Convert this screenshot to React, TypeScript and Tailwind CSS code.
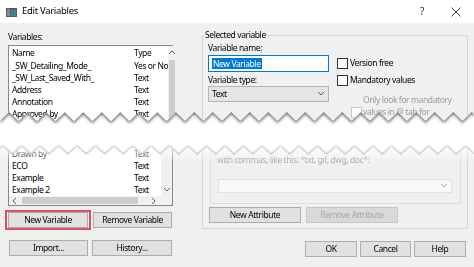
import React from "react";
import clsx from "clsx";

// torn paper edges, built once from the pattern
const W = 474;

const topClip = (() => {
  const pts: string[] = [];
  for (let k = 0; k * 9.25 <= W + 20; k++) {
    const x = k * 9.25;
    const y = k % 2 === 0 ? 121 : 112;
    pts.push(`${x}px ${y}px`);
  }
  pts.reverse();
  return `polygon(0px 0px, ${W}px 0px, ${pts.join(", ")})`;
})();

const bottomClip = (() => {
  const pts: string[] = [];
  for (let k = -2; 3 + k * 9.25 <= W + 20; k++) {
    const x = 3 + k * 9.25;
    const y = k % 2 === 0 ? 0 : 8;
    pts.push(`${x}px ${y}px`);
  }
  return `polygon(${pts.join(", ")}, ${W}px 120px, 0px 120px)`;
})();

const Chevron = ({ dir }: { dir: "up" | "down" | "left" | "right" }) => {
  const d = {
    up: "M1 5 L4 2 L7 5",
    down: "M1 2 L4 5 L7 2",
    left: "M5 1 L2 4 L5 7",
    right: "M2 1 L5 4 L2 7",
  }[dir];
  return (
    <svg width="8" height="8" viewBox="0 0 8 8">
      <path d={d} fill="none" stroke="#606060" strokeWidth="1" />
    </svg>
  );
};

function Btn({ label, className, disabled, focus }: { label: string; className: string; disabled?: boolean; focus?: boolean }) {
  return (
    <div
      className={clsx(
        "h-[16px] flex items-center justify-center border leading-none",
        disabled ? "bg-[#d9d9d9] border-[#c6c6c6] text-[#a8a8a8]" : "bg-[#e1e1e1] border-[#adadad] text-black",
        focus && "border-[#0078d7]",
        className
      )}
    >
      {label}
    </div>
  );
}

function Checkbox({ disabled }: { disabled?: boolean }) {
  return (
    <div
      className={clsx(
        "w-[11px] h-[11px] border bg-white shrink-0",
        disabled ? "border-[#c8c8c8]" : "border-[#333333]"
      )}
    />
  );
}

const topRows: [string, string][] = [
  ["_SW_Detailing_Mode_", "Yes or No"],
  ["_SW_Last_Saved_With_", "Text"],
  ["Address", "Text"],
  ["Annotation", "Text"],
  ["Approved by", "Text"],
];

const bottomRows: [string, string][] = [
  ["Drawn by", "Text"],
  ["ECO", "Text"],
  ["Example", "Text"],
  ["Example 2", "Text"],
];

function TitleBar() {
  return (
    <div className="h-[23px] bg-white flex items-center shrink-0">
      <svg width="11" height="9" viewBox="0 0 11 9" className="ml-[6px] mt-[1px]">
        <rect x="0" y="0" width="11" height="9" fill="#5a5a5a" />
        <rect x="5" y="2" width="5" height="6" fill="#2e8f86" />
        <rect x="1" y="1" width="3" height="7" fill="#8a8a8a" />
      </svg>
      <span className="ml-[5px] text-[9.5px] tracking-[-0.3px] text-black">Edit Variables</span>
      <span className="ml-auto text-[10px] text-[#333333]">?</span>
      <svg width="10" height="10" viewBox="0 0 10 10" className="ml-[27px] mr-[13px]">
        <path d="M0.5 0.5 L9.5 9.5 M9.5 0.5 L0.5 9.5" stroke="#333333" strokeWidth="1" />
      </svg>
    </div>
  );
}

function TopHalf() {
  return (
    <div className="[filter:drop-shadow(0_2px_1.5px_rgba(0,0,0,0.55))]">
      <div className="h-[122px] bg-[#f0f0f0] flex flex-col overflow-hidden" style={{ clipPath: topClip }}>
        <TitleBar />
        <div className="flex">
          {/* variables list */}
          <div className="ml-[8px] w-[165px] flex flex-col">
            <div className="mt-[7px] h-[13px] leading-[13px]">Variables:</div>
            <div className="mt-[2px] h-[90px] border border-b-0 border-[#828790] bg-white flex">
              <div className="flex-1 flex flex-col">
                <div className="h-[14px] flex items-center">
                  <span className="pl-[3px] w-[125px]">Name</span>
                  <span>Type</span>
                </div>
                {topRows.map(([n, t]) => (
                  <div key={n} className="h-[12px] flex items-center whitespace-nowrap">
                    <span className="pl-[3px] w-[125px]">{n}</span>
                    <span className="overflow-hidden flex-1">{t}</span>
                  </div>
                ))}
              </div>
              <div className="w-[11px] bg-[#f0f0f0] flex flex-col">
                <div className="h-[14px] flex items-center justify-center">
                  <Chevron dir="up" />
                </div>
                <div className="flex-1 mx-[1px] bg-[#cdcdcd]" />
              </div>
            </div>
          </div>

          {/* selected variable group */}
          <fieldset className="ml-[29px] mt-[5px] w-[266px] h-[110px] border border-b-0 border-[#d5d5d5] pl-[5px]">
            <legend className="-ml-[4px] px-[1px] leading-[14px]">Selected variable</legend>
            <div className="flex">
              <div className="w-[121px] flex flex-col">
                <div className="h-[12px] leading-[12px]">Variable name:</div>
                <div className="mt-[1px] h-[17px] border border-[#0078d7] bg-white flex items-center">
                  <span className="ml-[3px] px-[1px] bg-[#0078d7] text-white leading-[11px]">New Variable</span>
                </div>
                <div className="mt-[2px] h-[12px] leading-[12px]">Variable type:</div>
                <div className="h-[16px] border border-[#b5b5b5] bg-[#e5e5e5] flex items-center">
                  <span className="pl-[3px] flex-1">Text</span>
                  <span className="mr-[3px]">
                    <Chevron dir="down" />
                  </span>
                </div>
              </div>
              <div className="ml-[8px] flex flex-col">
                <div className="mt-[15px] h-[12px] flex items-center gap-[2px]">
                  <Checkbox />
                  <span>Version free</span>
                </div>
                <div className="mt-[5px] h-[12px] flex items-center gap-[2px]">
                  <Checkbox />
                  <span>Mandatory values</span>
                </div>
                <div className="mt-[8px] ml-[14px] flex gap-[1px] text-[#9a9a9a]">
                  <div className="mt-[13px]">
                    <Checkbox disabled />
                  </div>
                  <div className="flex flex-col">
                    <div className="h-[12px] leading-[12px]">Only look for mandatory</div>
                    <div className="h-[12px] leading-[12px]">values in @ tab for</div>
                    <div className="h-[12px] leading-[12px]">SOLIDWORKS files</div>
                  </div>
                </div>
              </div>
            </div>
          </fieldset>
        </div>
      </div>
    </div>
  );
}

function BottomHalf() {
  return (
    <div className="[filter:drop-shadow(0_-1px_1px_rgba(0,0,0,0.3))]">
      <div className="relative h-[120px] bg-[#f0f0f0] flex" style={{ clipPath: bottomClip }}>
        {/* variables list, continued */}
        <div className="ml-[8px] w-[165px] flex flex-col">
          <div className="h-[59px] border border-t-0 border-[#828790] bg-white flex flex-col">
            <div className="h-[49px] flex">
              <div className="flex-1 pt-[1px] flex flex-col">
                {bottomRows.map(([n, t]) => (
                  <div key={n} className="h-[12px] flex items-center whitespace-nowrap">
                    <span className="pl-[3px] w-[125px]">{n}</span>
                    <span>{t}</span>
                  </div>
                ))}
              </div>
              <div className="w-[11px] bg-[#f0f0f0] flex flex-col justify-end">
                <div className="h-[12px] flex items-center justify-center">
                  <Chevron dir="down" />
                </div>
              </div>
            </div>
            <div className="h-[9px] flex bg-[#f0f0f0]">
              <div className="w-[152px] flex items-center">
                <div className="w-[12px] flex justify-center">
                  <Chevron dir="left" />
                </div>
                <div className="ml-[1px] w-[116px] h-[7px] bg-[#cdcdcd]" />
                <div className="ml-[11px] w-[10px] flex justify-center">
                  <Chevron dir="right" />
                </div>
              </div>
              <div className="w-[11px]" />
            </div>
          </div>

          <div className="mt-[4px] flex items-center">
            <div className="-ml-[3px] w-[86px] h-[20px] border-2 border-[#dd4e66] flex items-center justify-center">
              <Btn label="New Variable" className="w-[80px]" focus />
            </div>
            <Btn label="Remove Variable" className="ml-[2px] w-[79px]" />
          </div>
          <div className="mt-[10px] flex">
            <Btn label="Import..." className="ml-[1px] w-[79px]" />
            <Btn label="History..." className="ml-[4px] w-[80px]" />
          </div>
        </div>

        {/* selected variable group, continued */}
        <div className="ml-[29px] w-[266px] flex flex-col">
          <div className="h-[82px] border border-t-0 border-[#d5d5d5] flex flex-col">
            <div className="ml-[7px] w-[251px] h-[57px] border border-t-0 border-[#dcdcdc] flex flex-col">
              <div className="mt-[7px] pl-[6px] h-[12px] leading-[12px] text-[#a6a6a6]">
                with commas, like this: *txt, gif, dwg, doc*:
              </div>
              <div className="mt-[13px] ml-[7px] w-[234px] h-[14px] border border-[#e0e0e0] bg-[#f9f9f9] flex items-center justify-end">
                <span className="mr-[3px] opacity-50">
                  <Chevron dir="down" />
                </span>
              </div>
            </div>
            <div className="mt-[3px] ml-[6px] flex">
              <Btn label="New Attribute" className="w-[92px]" />
              <Btn label="Remove Attribute" className="ml-[5px] w-[92px]" disabled />
            </div>
          </div>
          <div className="mt-[12px] ml-[103px] flex gap-[3px]">
            <Btn label="OK" className="w-[52px]" />
            <Btn label="Cancel" className="w-[51px]" />
            <Btn label="Help" className="w-[52px]" />
          </div>
        </div>

        {/* washed-out strip along the tear */}
        <div className="absolute left-0 right-0 top-0 h-[16px] bg-gradient-to-b from-white/80 to-transparent" />
      </div>
    </div>
  );
}

export default function App() {
  return (
    <div className="w-[474px] h-[267px] bg-white overflow-hidden text-black text-[8.5px] tracking-[-0.4px] font-['Noto_Sans',sans-serif]">
      <TopHalf />
      <div className="h-[25px]" />
      <BottomHalf />
    </div>
  );
}
